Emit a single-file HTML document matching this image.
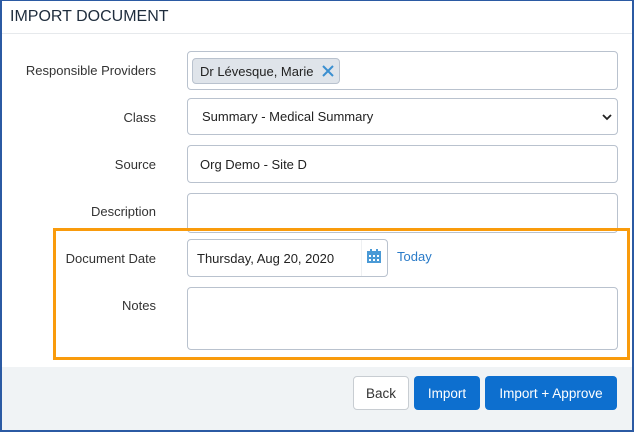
<!DOCTYPE html>
<html><head><style>
*{box-sizing:border-box;margin:0;padding:0}
body{width:634px;height:432px;background:#fff;font-family:"Liberation Sans",sans-serif;position:relative;overflow:hidden}
.frame{position:absolute;left:0;top:0;width:634px;height:432px;border:2px solid #2b5aa3;border-top:1px solid #2b5aa3}
.hdr{position:absolute;left:2px;top:1px;width:630px;height:33px;border-bottom:1px solid #e6e9ec;font-size:16px;color:#1f2d3d;padding:7px 0 0 8px}
.lbl{position:absolute;right:478px;font-size:13px;color:#333;text-align:right;white-space:nowrap}
.in{position:absolute;left:187px;width:431px;border:1px solid #b9c2ce;border-radius:4px;background:#fff;font-size:13px;color:#222}
.foot{position:absolute;left:2px;top:367px;width:630px;height:63px;background:#f0f3f5}
.btn{position:absolute;top:376px;height:34px;border-radius:4px;font-size:13.5px;display:flex;align-items:center;justify-content:center}
.orange{position:absolute;left:53px;top:228px;width:577px;height:132px;border:3px solid #f99b0c}
</style></head><body>
<div class="frame"></div>
<div class="hdr">IMPORT DOCUMENT</div>
<div class="lbl" style="top:63px">Responsible Providers</div>
<div class="in" style="top:51px;height:39px">
 <div style="position:absolute;left:4px;top:6px;height:26px;width:148px;background:#dfe4ea;border:1px solid #b9c2ce;border-radius:4px;padding:5px 0 0 7px;font-size:13px;color:#222">Dr Lévesque, Marie <svg style="position:absolute;left:129px;top:6px" width="12" height="12" viewBox="0 0 12 12"><path d="M1 1L11 11M11 1L1 11" stroke="#3b8fd0" stroke-width="2"/></svg></div>
</div>
<div class="lbl" style="top:110px">Class</div>
<div class="in" style="top:98px;height:37px;padding:10px 0 0 14px">Summary - Medical Summary<svg style="position:absolute;right:5px;top:14px" width="10" height="8" viewBox="0 0 10 8"><path d="M1 2L5 6L9 2" stroke="#222" stroke-width="1.8" fill="none"/></svg></div>
<div class="lbl" style="top:157px">Source</div>
<div class="in" style="top:145px;height:38px;padding:11px 0 0 12px">Org Demo - Site D</div>
<div class="lbl" style="top:204px">Description</div>
<div class="in" style="top:193px;height:40px"></div>
<div class="orange"></div>
<div class="lbl" style="top:251px">Document Date</div>
<div class="in" style="top:239px;height:38px;width:201px;padding:11px 0 0 9px">Thursday, Aug 20, 2020
 <div style="position:absolute;left:173px;top:0;width:1px;height:36px;background:#eef0f2"></div>
 <svg style="position:absolute;left:178px;top:8px" width="16" height="16" viewBox="0 0 16 16"><rect x="1" y="3" width="14" height="12" fill="#4a9ad6"/><rect x="4" y="1" width="2" height="4" fill="#4a9ad6"/><rect x="10" y="1" width="2" height="4" fill="#4a9ad6"/><g fill="#fff"><rect x="3" y="7" width="2" height="2"/><rect x="7" y="7" width="2" height="2"/><rect x="11" y="7" width="2" height="2"/><rect x="3" y="11" width="2" height="2"/><rect x="7" y="11" width="2" height="2"/><rect x="11" y="11" width="2" height="2"/></g></svg>
</div>
<div style="position:absolute;left:397px;top:249px;font-size:13px;color:#2a7bc8">Today</div>
<div class="lbl" style="top:298px">Notes</div>
<div class="in" style="top:287px;height:63px"></div>
<div class="foot"></div>
<div class="btn" style="left:353px;width:56px;background:#fff;border:1px solid #c8cdd2;color:#333">Back</div>
<div class="btn" style="left:414px;width:66px;background:#0d6fcf;color:#fff">Import</div>
<div class="btn" style="left:485px;width:132px;background:#0d6fcf;color:#fff">Import + Approve</div>
</body></html>
